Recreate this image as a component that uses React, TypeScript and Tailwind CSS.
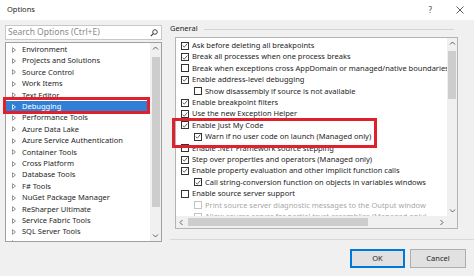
import React from 'react';

const TREE_ITEMS = [
    'Environment',
    'Projects and Solutions',
    'Source Control',
    'Work Items',
    'Text Editor',
    'Debugging',
    'Performance Tools',
    'Azure Data Lake',
    'Azure Service Authentication',
    'Container Tools',
    'Cross Platform',
    'Database Tools',
    'F# Tools',
    'NuGet Package Manager',
    'ReSharper Ultimate',
    'Service Fabric Tools',
    'SQL Server Tools',
    'Tools for Apache Cordova',
];

type Opt = { label: string; checked: boolean; indent?: boolean; disabled?: boolean };

const OPTIONS: Opt[] = [
    { label: 'Ask before deleting all breakpoints', checked: true },
    { label: 'Break all processes when one process breaks', checked: true },
    { label: 'Break when exceptions cross AppDomain or managed/native boundaries (Managed only)', checked: false },
    { label: 'Enable address-level debugging', checked: true },
    { label: 'Show disassembly if source is not available', checked: false, indent: true },
    { label: 'Enable breakpoint filters', checked: true },
    { label: 'Use the new Exception Helper', checked: true },
    { label: 'Enable Just My Code', checked: true },
    { label: 'Warn if no user code on launch (Managed only)', checked: true, indent: true },
    { label: 'Enable .NET Framework source stepping', checked: false },
    { label: 'Step over properties and operators (Managed only)', checked: true },
    { label: 'Enable property evaluation and other implicit function calls', checked: true },
    { label: 'Call string-conversion function on objects in variables windows', checked: true, indent: true },
    { label: 'Enable source server support', checked: false },
    { label: 'Print source server diagnostic messages to the Output window', checked: false, indent: true, disabled: true },
    { label: 'Allow source server for partial trust assemblies (Managed only)', checked: false, indent: true, disabled: true },
];

const Checkbox: React.FC<{ checked: boolean; disabled?: boolean }> = ({ checked, disabled }) => (
    <span
        className={`w-[8px] h-[8px] shrink-0 border bg-white flex items-center justify-center ${
            disabled ? 'border-[#c4c4c4]' : 'border-[#333]'
        }`}
    >
        {checked && (
            <svg width="7" height="7" viewBox="0 0 7 7">
                <path d="M0.8 3.6 L2.7 5.4 L6.2 1.2" fill="none" stroke="#333" strokeWidth="0.9" />
            </svg>
        )}
    </span>
);

const Arrow: React.FC<{ dir: 'up' | 'down' | 'left' | 'right' }> = ({ dir }) => {
    const d = {
        up: 'M1 4.5 L3.5 2 L6 4.5',
        down: 'M1 2.5 L3.5 5 L6 2.5',
        left: 'M4.5 1 L2 3.5 L4.5 6',
        right: 'M2.5 1 L5 3.5 L2.5 6',
    }[dir];
    return (
        <svg width="7" height="7" viewBox="0 0 7 7">
            <path d={d} fill="none" stroke="#606060" strokeWidth="1" />
        </svg>
    );
};

export default function App() {
    return (
        <div
            className="w-[474px] h-[276px] bg-[#f0f0f0] flex flex-col overflow-hidden text-[#1e1e1e] relative"
            style={{ fontFamily: '"Noto Sans", "Open Sans", sans-serif' }}
        >
            {/* Title bar */}
            <div className="h-[20px] bg-white flex items-center pl-[7px] text-[7.5px]">
                <span>Options</span>
                <span className="ml-auto text-[8px] text-[#444] mr-[24px]">?</span>
                <svg width="8" height="8" viewBox="0 0 8 8" className="mr-[10px]">
                    <path d="M0.5 0.5 L7.5 7.5 M7.5 0.5 L0.5 7.5" stroke="#333" strokeWidth="0.8" />
                </svg>
            </div>

            <div className="flex flex-1">
                {/* Left pane */}
                <div className="w-[157px] ml-[5px] pt-[5px] flex flex-col">
                    <div className="h-[15px] border border-[#c8c8c8] bg-white flex items-center pl-[2px] pr-[3px] text-[8.5px] text-[#8a8a8a]">
                        <span>Search Options (Ctrl+E)</span>
                        <svg width="8" height="8" viewBox="0 0 8 8" className="ml-auto">
                            <circle cx="5" cy="3" r="2.3" fill="none" stroke="#333" strokeWidth="0.9" />
                            <path d="M3.3 4.7 L0.8 7.2" stroke="#333" strokeWidth="1.1" />
                        </svg>
                    </div>
                    <div className="mt-[2px] h-[200px] border border-[#a0a0a0] bg-white flex overflow-hidden">
                        <div className="flex-1 pt-[1px] text-[7.5px] overflow-hidden">
                            {TREE_ITEMS.map((item) => {
                                const sel = item === 'Debugging';
                                return (
                                    <div
                                        key={item}
                                        className={`h-[11.4px] flex items-center pl-[6px] whitespace-nowrap ${
                                            sel ? 'bg-[#2f7fd6] text-white' : ''
                                        }`}
                                    >
                                        <svg width="4" height="6" viewBox="0 0 4 6" className="mr-[6px]">
                                            <path d="M0.5 0.7 L3.5 3 L0.5 5.3 Z" fill="none" stroke={sel ? '#fff' : '#777'} strokeWidth="0.8" />
                                        </svg>
                                        <span>{item}</span>
                                    </div>
                                );
                            })}
                        </div>
                        <div className="w-[11px] bg-[#f0f0f0] flex flex-col items-center">
                            <div className="h-[11px] flex items-center justify-center">
                                <Arrow dir="up" />
                            </div>
                            <div className="w-[8px] h-[150px] bg-[#cdcdcd] mt-[3px]" />
                            <div className="mt-auto h-[11px] flex items-center justify-center">
                                <Arrow dir="down" />
                            </div>
                        </div>
                    </div>
                </div>

                {/* Right pane */}
                <div className="flex-1 flex flex-col pl-[8px]">
                    <div className="h-[17px] flex items-center pt-[1px] text-[7.5px]">
                        <span>General</span>
                        <div className="flex-1 h-px bg-[#d4d4d4] ml-[6px] mr-[20px]" />
                    </div>
                    <div className="ml-[5px] w-[283px] h-[192px] border border-[#b4b4b4] bg-white flex flex-col overflow-hidden">
                        <div className="flex flex-1 min-h-0">
                            <div className="flex-1 pt-[2px] text-[7.5px] overflow-hidden">
                                {OPTIONS.map((o) => (
                                    <div
                                        key={o.label}
                                        className={`h-[11.4px] flex items-center whitespace-nowrap gap-[3px] ${
                                            o.indent ? 'pl-[18px]' : 'pl-[5px]'
                                        } ${o.disabled ? 'text-[#a8a8a8]' : ''}`}
                                    >
                                        <Checkbox checked={o.checked} disabled={o.disabled} />
                                        <span>{o.label}</span>
                                    </div>
                                ))}
                            </div>
                            <div className="w-[10px] bg-[#f0f0f0] flex flex-col items-center">
                                <div className="h-[11px] flex items-center justify-center">
                                    <Arrow dir="up" />
                                </div>
                                <div className="w-[8px] h-[48px] bg-[#cdcdcd] mt-[2px]" />
                                <div className="mt-auto h-[11px] flex items-center justify-center">
                                    <Arrow dir="down" />
                                </div>
                            </div>
                        </div>
                        <div className="h-[12px] bg-[#f0f0f0] flex items-center">
                            <div className="w-[11px] flex justify-center">
                                <Arrow dir="left" />
                            </div>
                            <div className="w-[180px] h-[8px] bg-[#cdcdcd] ml-[1px]" />
                            <div className="ml-auto w-[11px] flex justify-center mr-[10px]">
                                <Arrow dir="right" />
                            </div>
                        </div>
                    </div>
                    <div className="mt-[10px] h-px bg-[#d7d7d7]" />
                    <div className="flex justify-end gap-[5px] pt-[9px] pr-[8px] text-[7.5px]">
                        <button className="w-[55px] h-[19px] bg-[#e1e1e1] border-2 border-[#0078d7]">OK</button>
                        <button className="w-[56px] h-[19px] bg-[#e1e1e1] border border-[#adadad]">Cancel</button>
                    </div>
                </div>
            </div>

            {/* Highlight boxes */}
            <div className="absolute left-[3px] top-[97px] w-[147px] h-[17px] border-[3px] border-[#e0202a]" />
            <div className="absolute left-[172px] top-[118px] w-[205px] h-[30px] border-[3px] border-[#e0202a]" />
        </div>
    );
}
